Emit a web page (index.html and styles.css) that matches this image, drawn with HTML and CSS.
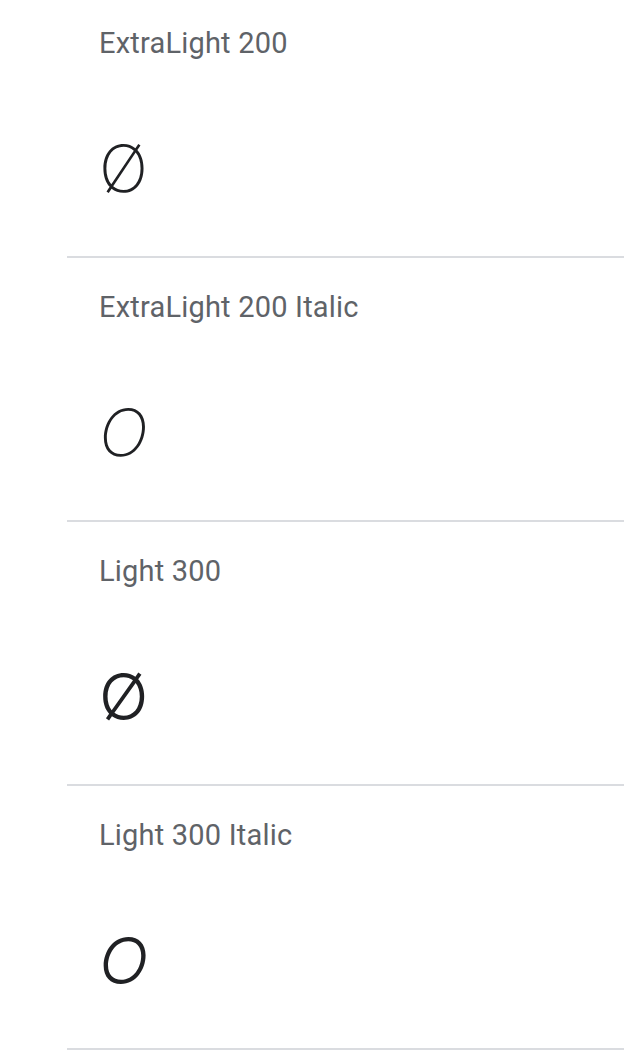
FILE: index.html
```html
<!DOCTYPE html>
<html>
<head>
<meta charset="utf-8">
<link rel="stylesheet" href="styles.css">
</head>
<body>
<div class="list">
  <div class="row">
    <div class="label">ExtraLight 200</div>
    <div class="glyph w200">Ø</div>
  </div>
  <div class="row">
    <div class="label">ExtraLight 200 Italic</div>
    <div class="glyph w200 it">O</div>
  </div>
  <div class="row">
    <div class="label">Light 300</div>
    <div class="glyph w300">Ø</div>
  </div>
  <div class="row">
    <div class="label">Light 300 Italic</div>
    <div class="glyph w300 it">O</div>
  </div>
</div>
</body>
</html>
```
FILE: styles.css
```css
html, body {
  margin: 0;
  padding: 0;
  background: #ffffff;
}
.list {
  margin-top: -6px;
  margin-left: 67px;
}
.row {
  border-bottom: 2px solid #dadce0;
  padding-top: 29px;
  padding-left: 32px;
  height: 233px;
}
.label {
  font-family: Roboto, "Open Sans", sans-serif;
  font-size: 29px;
  line-height: 40px;
  letter-spacing: 0.2px;
  color: #5f6368;
}
.glyph {
  margin-top: 66px;
  font-family: Inter, "Noto Sans", sans-serif;
  font-size: 65px;
  line-height: 80px;
  color: #202124;
}
.w200 { font-weight: 200; }
.w300 { font-weight: 340; }
.it { font-style: italic; }
```
